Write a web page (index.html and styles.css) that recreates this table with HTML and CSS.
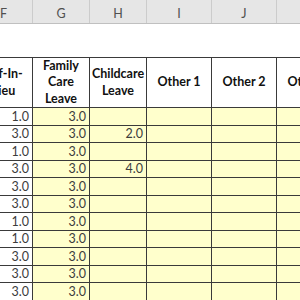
FILE: index.html
```html
<!DOCTYPE html>
<html>
<head>
<meta charset="utf-8">
<link rel="stylesheet" href="styles.css">
</head>
<body>
<div class="sheet">
  <div class="letters">
    <div class="letter">F</div>
    <div class="letter">G</div>
    <div class="letter">H</div>
    <div class="letter">I</div>
    <div class="letter">J</div>
    <div class="letter">K</div>
  </div>
  <div class="blank"></div>
  <div class="grid">
    <div class="cell head">Off-In-<br>Lieu</div>
    <div class="cell head">Family<br>Care<br>Leave</div>
    <div class="cell head">Childcare<br>Leave</div>
    <div class="cell head">Other 1</div>
    <div class="cell head">Other 2</div>
    <div class="cell head">Other 3</div>

    <div class="cell num plain">1.0</div><div class="cell num fill">3.0</div><div class="cell num fill"></div><div class="cell fill"></div><div class="cell fill"></div><div class="cell fill"></div>
    <div class="cell num plain">3.0</div><div class="cell num fill">3.0</div><div class="cell num fill">2.0</div><div class="cell fill"></div><div class="cell fill"></div><div class="cell fill"></div>
    <div class="cell num plain">1.0</div><div class="cell num fill">3.0</div><div class="cell num fill"></div><div class="cell fill"></div><div class="cell fill"></div><div class="cell fill"></div>
    <div class="cell num plain">3.0</div><div class="cell num fill">3.0</div><div class="cell num fill">4.0</div><div class="cell fill"></div><div class="cell fill"></div><div class="cell fill"></div>
    <div class="cell num plain">3.0</div><div class="cell num fill">3.0</div><div class="cell num fill"></div><div class="cell fill"></div><div class="cell fill"></div><div class="cell fill"></div>
    <div class="cell num plain">3.0</div><div class="cell num fill">3.0</div><div class="cell num fill"></div><div class="cell fill"></div><div class="cell fill"></div><div class="cell fill"></div>
    <div class="cell num plain">1.0</div><div class="cell num fill">3.0</div><div class="cell num fill"></div><div class="cell fill"></div><div class="cell fill"></div><div class="cell fill"></div>
    <div class="cell num plain">1.0</div><div class="cell num fill">3.0</div><div class="cell num fill"></div><div class="cell fill"></div><div class="cell fill"></div><div class="cell fill"></div>
    <div class="cell num plain">3.0</div><div class="cell num fill">3.0</div><div class="cell num fill"></div><div class="cell fill"></div><div class="cell fill"></div><div class="cell fill"></div>
    <div class="cell num plain">3.0</div><div class="cell num fill">3.0</div><div class="cell num fill"></div><div class="cell fill"></div><div class="cell fill"></div><div class="cell fill"></div>
    <div class="cell num plain">3.0</div><div class="cell num fill">3.0</div><div class="cell num fill"></div><div class="cell fill"></div><div class="cell fill"></div><div class="cell fill"></div>
    <div class="cell num plain">3.0</div><div class="cell num fill">3.0</div><div class="cell num fill"></div><div class="cell fill"></div><div class="cell fill"></div><div class="cell fill"></div>
  </div>
</div>
</body>
</html>
```

FILE: styles.css
```css
html, body {
  margin: 0;
  padding: 0;
  overflow: hidden;
  background: #ffffff;
}

.sheet {
  width: 400px;
  margin-left: -25px;
  font-family: Lato, "Liberation Sans", Arial, sans-serif;
  font-size: 12.5px;
}

.letters {
  display: grid;
  grid-template-columns: 58px 57px 57px 65px 65px 65px;
  height: 24px;
  box-sizing: border-box;
  background: #e6e6e6;
  border-bottom: 1px solid #c0c0c0;
}

.letter {
  display: flex;
  align-items: center;
  justify-content: center;
  border-right: 1px solid #cccccc;
  color: #505050;
  font-size: 12.5px;
  padding-top: 3px;
  box-sizing: border-box;
}

.blank {
  height: 33px;
}

.grid {
  display: grid;
  grid-template-columns: 58px 57px 57px 65px 65px 65px;
  grid-template-rows: 50px;
  grid-auto-rows: 17.5px;
  border-top: 1px solid #3a3a3a;
}

.cell {
  box-sizing: border-box;
  border-right: 1px solid #3a3a3a;
  border-bottom: 1px solid #3a3a3a;
}

.head {
  display: flex;
  align-items: center;
  justify-content: center;
  text-align: center;
  font-weight: bold;
  color: #111111;
  line-height: 16.5px;
  background: #ffffff;
}

.num {
  display: flex;
  align-items: center;
  justify-content: flex-end;
  padding-right: 3px;
  color: #3c3c3c;
}

.plain {
  background: #ffffff;
}

.fill {
  background: #ffffcc;
}
```
